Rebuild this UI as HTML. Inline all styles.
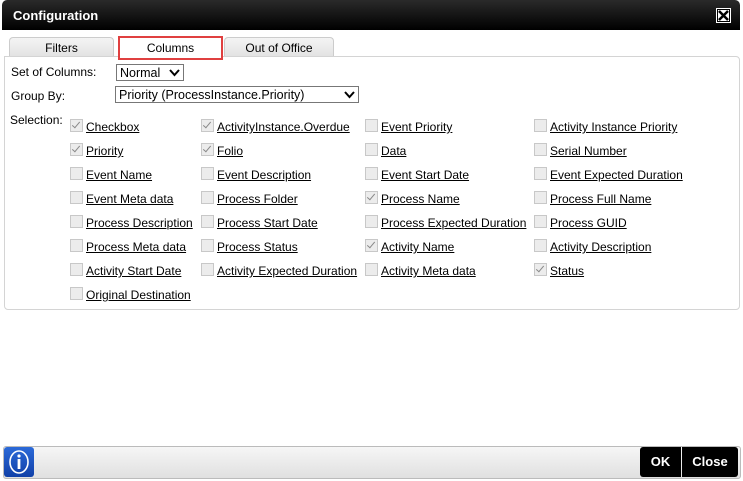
<!DOCTYPE html>
<html><head><meta charset="utf-8"><style>
body{margin:0;width:743px;height:481px;background:#fff;position:relative;overflow:hidden;font-family:"Liberation Sans",Arial,sans-serif;font-size:12px;color:#000}
.a{position:absolute}
.title{left:2px;top:0;width:738px;height:30px;background:linear-gradient(#2a2a2a,#000);border-radius:5px 5px 0 0}
.title span{position:absolute;left:11px;top:8px;color:#fff;font-weight:bold;font-size:13px}
.xb{left:716px;top:8px;width:13px;height:13px;background:#fff;border:1px solid #fff}
.tab{top:37px;height:19px;border:1px solid #ccc;border-bottom:none;border-radius:4px 4px 0 0;background:linear-gradient(#f4f4f4,#e2e2e2);text-align:center;line-height:20px;font-size:12px}
.panel{left:4px;top:56px;width:734px;height:252px;border:1px solid #d4d4d4;border-radius:0 4px 4px 4px}
.sel{border:1px solid #777;height:17px;background:#fff;font-size:12.5px;line-height:17px;padding-left:3px;box-sizing:border-box}
.cb{width:11px;height:11px;border:1px solid #c8c8c8;background:#ececec}
.cb.c::after{content:"";position:absolute;left:3px;top:0px;width:3px;height:7px;border:solid #888;border-width:0 1.5px 1.5px 0;transform:rotate(40deg)}
.lb{text-decoration:underline;font-size:12px;white-space:nowrap}
.foot{left:3px;top:446px;width:736px;height:31px;border:1px solid #bbb;border-radius:3px;background:linear-gradient(#f6f6f6,#e0e0e0)}
.btn{top:447px;height:30px;background:#000;color:#fff;font-weight:bold;font-size:13px;text-align:center;line-height:30px}
</style></head><body>
<div class="a title"><span>Configuration</span></div>
<div class="a xb"><svg width="13" height="13" viewBox="0 0 13 13"><rect x="0.5" y="0.5" width="12" height="12" fill="#fff" stroke="#000"/><path d="M2 2L11 11M11 2L2 11" stroke="#000" stroke-width="2.5"/></svg></div>
<div class="a tab" style="left:9px;width:103px">Filters</div>
<div class="a tab" style="left:224px;width:108px">Out of Office</div>
<div class="a panel"></div>
<div class="a tab" style="left:118px;width:101px;top:36px;height:20px;background:#fff;border:2px solid #e04040;border-radius:0">Columns</div>
<div class="a" style="left:11px;top:65px;font-size:12px">Set of Columns:</div>
<div class="a sel" style="left:116px;top:64px;width:68px">Normal<svg class="a" style="left:52px;top:4px" width="11" height="8"><path d="M1 1L5.5 6L10 1" stroke="#000" stroke-width="2" fill="none"/></svg></div>
<div class="a" style="left:11px;top:89px;font-size:12px">Group By:</div>
<div class="a sel" style="left:115px;top:86px;width:244px">Priority (ProcessInstance.Priority)<svg class="a" style="left:228px;top:4px" width="11" height="8"><path d="M1 1L5.5 6L10 1" stroke="#000" stroke-width="2" fill="none"/></svg></div>
<div class="a" style="left:10px;top:113px;font-size:12px">Selection:</div>
<div id="g"></div>
<script>
var cols=[70,201,365,534];
var items=[["Checkbox",1],["ActivityInstance.Overdue",1],["Event Priority",0],["Activity Instance Priority",0],
["Priority",1],["Folio",1],["Data",0],["Serial Number",0],
["Event Name",0],["Event Description",0],["Event Start Date",0],["Event Expected Duration",0],
["Event Meta data",0],["Process Folder",0],["Process Name",1],["Process Full Name",0],
["Process Description",0],["Process Start Date",0],["Process Expected Duration",0],["Process GUID",0],
["Process Meta data",0],["Process Status",0],["Activity Name",1],["Activity Description",0],
["Activity Start Date",0],["Activity Expected Duration",0],["Activity Meta data",0],["Status",1],
["Original Destination",0]];
var h="";
items.forEach(function(t,i){var x=cols[i%4],y=119+Math.floor(i/4)*24;
h+='<div class="a cb'+(t[1]?' c':'')+'" style="left:'+x+'px;top:'+y+'px"></div><div class="a lb" style="left:'+(x+16)+'px;top:'+(y+1)+'px">'+t[0]+'</div>';});
document.getElementById("g").innerHTML=h;
</script>
<div class="a foot"></div>
<div class="a" style="left:4px;top:447px;width:30px;height:30px;background:linear-gradient(#2c6ad8,#1040a8);border-radius:3px"><svg width="30" height="30"><ellipse cx="15" cy="15" rx="9" ry="11" fill="none" stroke="#fff" stroke-width="1.6"/><circle cx="15" cy="9" r="1.6" fill="#fff"/><rect x="13.6" y="12" width="2.8" height="10" fill="#fff"/></svg></div>
<div class="a btn" style="left:640px;width:41px;border-radius:3px 0 0 3px">OK</div>
<div class="a btn" style="left:682px;width:56px;border-radius:0 3px 3px 0">Close</div>
</body></html>
